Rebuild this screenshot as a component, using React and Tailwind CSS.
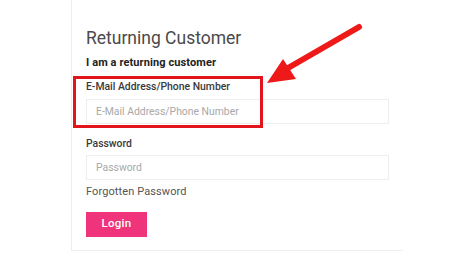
export default function App() {
  return (
    <div className="relative w-[474px] h-[253px] bg-white overflow-hidden" style={{ fontFamily: 'Roboto, "Liberation Sans", sans-serif' }}>
      <div className="relative ml-[71px] w-[332px] h-[251px] border-l border-b border-[#eeeeee] pl-[14px] pt-[28px] flex flex-col items-start">
        <h2 className="text-[17.5px] leading-[21px] text-[#4a4a4a]">Returning Customer</h2>
        <p className="mt-[6.5px] text-[11px] leading-[14px] font-bold tracking-[0.1px] text-[#222]">I am a returning customer</p>

        <label className="mt-[10px] text-[10.4px] leading-[13px] font-medium text-[#3a3a3a]">E-Mail Address/Phone Number</label>
        <input
          className="mt-[6px] w-[303px] h-[25px] border border-[#eeeeee] px-[9px] text-[10.4px] text-[#333] placeholder:text-[#a8a8a8] outline-none"
          placeholder="E-Mail Address/Phone Number"
        />

        <label className="mt-[13px] text-[10.4px] leading-[13px] font-medium text-[#3a3a3a]">Password</label>
        <input
          type="password"
          className="mt-[5px] w-[303px] h-[25px] border border-[#eeeeee] px-[9px] text-[10.4px] text-[#333] placeholder:text-[#a8a8a8] outline-none"
          placeholder="Password"
        />

        <a className="mt-[5px] text-[11px] leading-[14px] text-[#555] tracking-[0.1px]">Forgotten Password</a>

        <button className="mt-[13px] w-[61px] h-[25px] bg-[#f0347b] text-white text-[11.5px] font-medium tracking-[0.3px]">Login</button>

        {/* annotation box */}
        <div className="absolute left-[1px] top-[76px] w-[190px] h-[52px] border-[3px] border-[#e4141b]" />
      </div>

      {/* annotation arrow */}
      <svg className="absolute left-0 top-0" width="474" height="253" viewBox="0 0 474 253">
        <line x1="359" y1="27" x2="288" y2="68" stroke="#ee1a1a" strokeWidth="6" strokeLinecap="round" />
        <polygon points="267,83 283,59 296,79" fill="#ee1a1a" />
      </svg>
    </div>
  );
}
